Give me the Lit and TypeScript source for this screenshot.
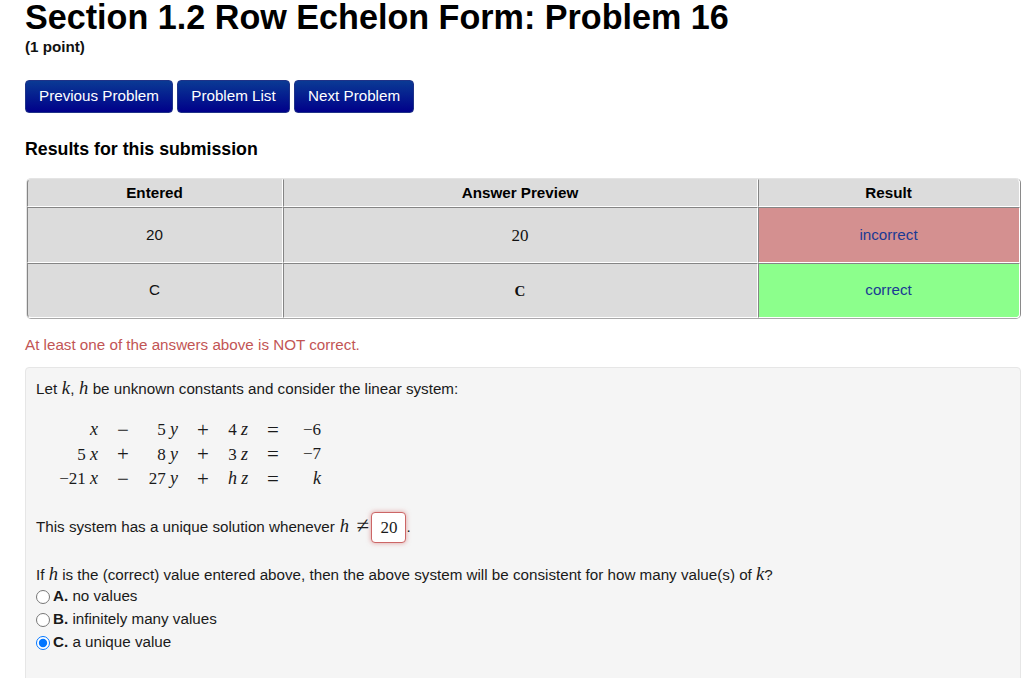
import { LitElement, html, css } from "lit";
import { customElement } from "lit/decorators.js";

const rows: string[][] = [
  ["x", "−", "5 y", "+", "4 z", "=", "−6"],
  ["5 x", "+", "8 y", "+", "3 z", "=", "−7"],
  ["−21 x", "−", "27 y", "+", "h z", "=", "k"],
];

@customElement("app-root")
export class AppRoot extends LitElement {
  static styles = css`
    :host {
      display: block;
      height: 678px;
      overflow: hidden;
      font-family: "Liberation Sans", Arial, sans-serif;
      font-size: 15.2px;
      color: #1a1a1a;
      background: #fff;
    }
    .page { padding: 0 3px 0 25px; }
    h1 { margin: 0; font-size: 34.15px; line-height: 35px; font-weight: 700; color: #000; }
    .pts { margin-top: 3px; font-weight: 700; line-height: 17px; color: #111; }
    .nav { display: flex; gap: 4.4px; margin-top: 25px; }
    .btn {
      height: 33px;
      box-sizing: border-box;
      padding: 0 13px 3px;
      display: flex;
      align-items: center;
      border: 1px solid #1f3288;
      border-radius: 4px;
      color: #fff;
      background: linear-gradient(#0a3a94, #00008a);
    }
    h2 { margin: 26px 0 0; font-size: 17.75px; line-height: 20px; font-weight: 700; color: #000; }
    table {
      margin: 19px 0 0 1px;
      width: 995px;
      border: 1px solid;
      border-color: #e4e4e4 #8a8a8a #a8a8a8 #e4e4e4;
      border-radius: 5px;
      border-spacing: 0;
      table-layout: fixed;
      box-sizing: border-box;
    }
    th, td {
      box-sizing: border-box;
      background: #dcdcdc;
      text-align: center;
      padding: 0 1px 2px 0;
      border: 1px solid;
      border-color: #858585 #fff #fff #858585;
      color: #111;
    }
    th { height: 28px; font-weight: 700; color: #000; border-top-color: #dcdcdc; }
    th.w1 { width: 256px; }
    th.w2 { width: 475px; }
    td { height: 56px; }
    tbody tr:last-child td { height: 55px; }
    thead tr > :first-child { border-top-left-radius: 4px; }
    thead tr > :last-child { border-top-right-radius: 4px; }
    tbody tr:last-child > :first-child { border-bottom-left-radius: 4px; }
    tbody tr:last-child > :last-child { border-bottom-right-radius: 4px; }
    td.math { font-family: "Liberation Serif", serif; font-size: 17px; padding: 1px 1px 0 0; }
    .cap { font-size: 15px; font-weight: 700; }
    td.bad { background: #d49090; color: #1a3a94; }
    td.good { background: #8cff8c; color: #1a3a94; }
    .warn { margin-top: 17px; line-height: 18px; color: #c25555; }
    .panel {
      margin-top: 13px;
      height: 400px;
      box-sizing: border-box;
      padding: 11px 10px;
      background: #f5f5f5;
      border: 1px solid #e6e6e6;
      border-radius: 4px;
    }
    p { margin: 0; line-height: 18px; }
    i { font-family: "Liberation Serif", serif; font-size: 18.5px; line-height: 18px; margin: 0 .3px; }
    .after i { margin: 0; }
    .eqs {
      display: grid;
      grid-template-columns: 62px 50px 30px 50px 20px 50px 23px;
      grid-auto-rows: 24.6px;
      margin: 19.5px 0 20px;
      font-family: "Liberation Serif", serif;
      font-size: 17px;
      align-items: center;
    }
    .eqs em { font-size: 18px; }
    .r { text-align: right; white-space: nowrap; }
    .c { text-align: center; font-size: 21px; line-height: 20px; }
    .q { display: flex; align-items: center; height: 32px; white-space: pre; }
    .lead { display: flex; align-items: center; margin-bottom: 2px; }
    .q i { margin-left: 5px; }
    .ne { font-family: "Liberation Serif", serif; font-size: 23px; line-height: 20px; margin: 0 2px 0 7px; width: 13px; text-align: center; }
    .ans {
      width: 35px;
      height: 31px;
      box-sizing: border-box;
      padding-top: 1px;
      display: flex;
      align-items: center;
      justify-content: center;
      border: 1px solid #c66;
      border-radius: 4px;
      background: #fff;
      box-shadow: 0 0 5px rgba(204, 80, 80, .55);
      font-family: "Liberation Serif", serif;
      font-size: 17px;
    }
    .after { margin-top: 22px; }
    .opt { display: flex; align-items: center; height: 23px; }
    .opt input { margin: 0 3px 0 0; width: 14px; height: 14px; accent-color: #0075ff; position: relative; top: 1px; }
    b { font-weight: 700; }
  `;

  render() {
    return html`<div class="page">
      <h1>Section 1.2 Row Echelon Form: Problem 16</h1>
      <div class="pts">(1 point)</div>
      <div class="nav">
        <div class="btn">Previous Problem</div>
        <div class="btn">Problem List</div>
        <div class="btn">Next Problem</div>
      </div>
      <h2>Results for this submission</h2>
      <table>
        <thead><tr><th class="w1">Entered</th><th class="w2">Answer Preview</th><th>Result</th></tr></thead>
        <tbody>
          <tr><td>20</td><td class="math">20</td><td class="bad">incorrect</td></tr>
          <tr><td>C</td><td class="math"><span class="cap">C</span></td><td class="good">correct</td></tr>
        </tbody>
      </table>
      <div class="warn">At least one of the answers above is NOT correct.</div>
      <div class="panel">
        <p>Let <i>k</i>, <i>h</i> be unknown constants and consider the linear system:</p>
        <div class="eqs">
          ${rows.map((r) =>
            r.map((cell, i) =>
              i % 2 === 0 && i < 6
                ? html`<div class="r">${this.term(cell)}</div>`
                : i === 6
                ? html`<div class="r">${cell === "k" ? html`<em>k</em>` : cell}</div>`
                : html`<div class="c">${cell}</div>`
            )
          )}
        </div>
        <div class="q"><span class="lead">This system has a unique solution whenever<i>h</i><span class="ne">≠</span></span><span class="ans">20</span><span class="lead">.</span></div>
        <p class="after">If <i>h</i> is the (correct) value entered above, then the above system will be consistent for how many value(s) of <i>k</i>?</p>
        <label class="opt"><input type="radio" name="a" /><span><b>A.</b> no values</span></label>
        <label class="opt"><input type="radio" name="a" /><span><b>B.</b> infinitely many values</span></label>
        <label class="opt"><input type="radio" name="a" checked /><span><b>C.</b> a unique value</span></label>
      </div>
    </div>`;
  }

  term(s: string) {
    const p = s.split(" ");
    return p.length === 1
      ? html`<em>${p[0]}</em>`
      : html`${p[0] === "h" ? html`<em>h</em>` : p[0]} <em>${p[1]}</em>`;
  }
}
